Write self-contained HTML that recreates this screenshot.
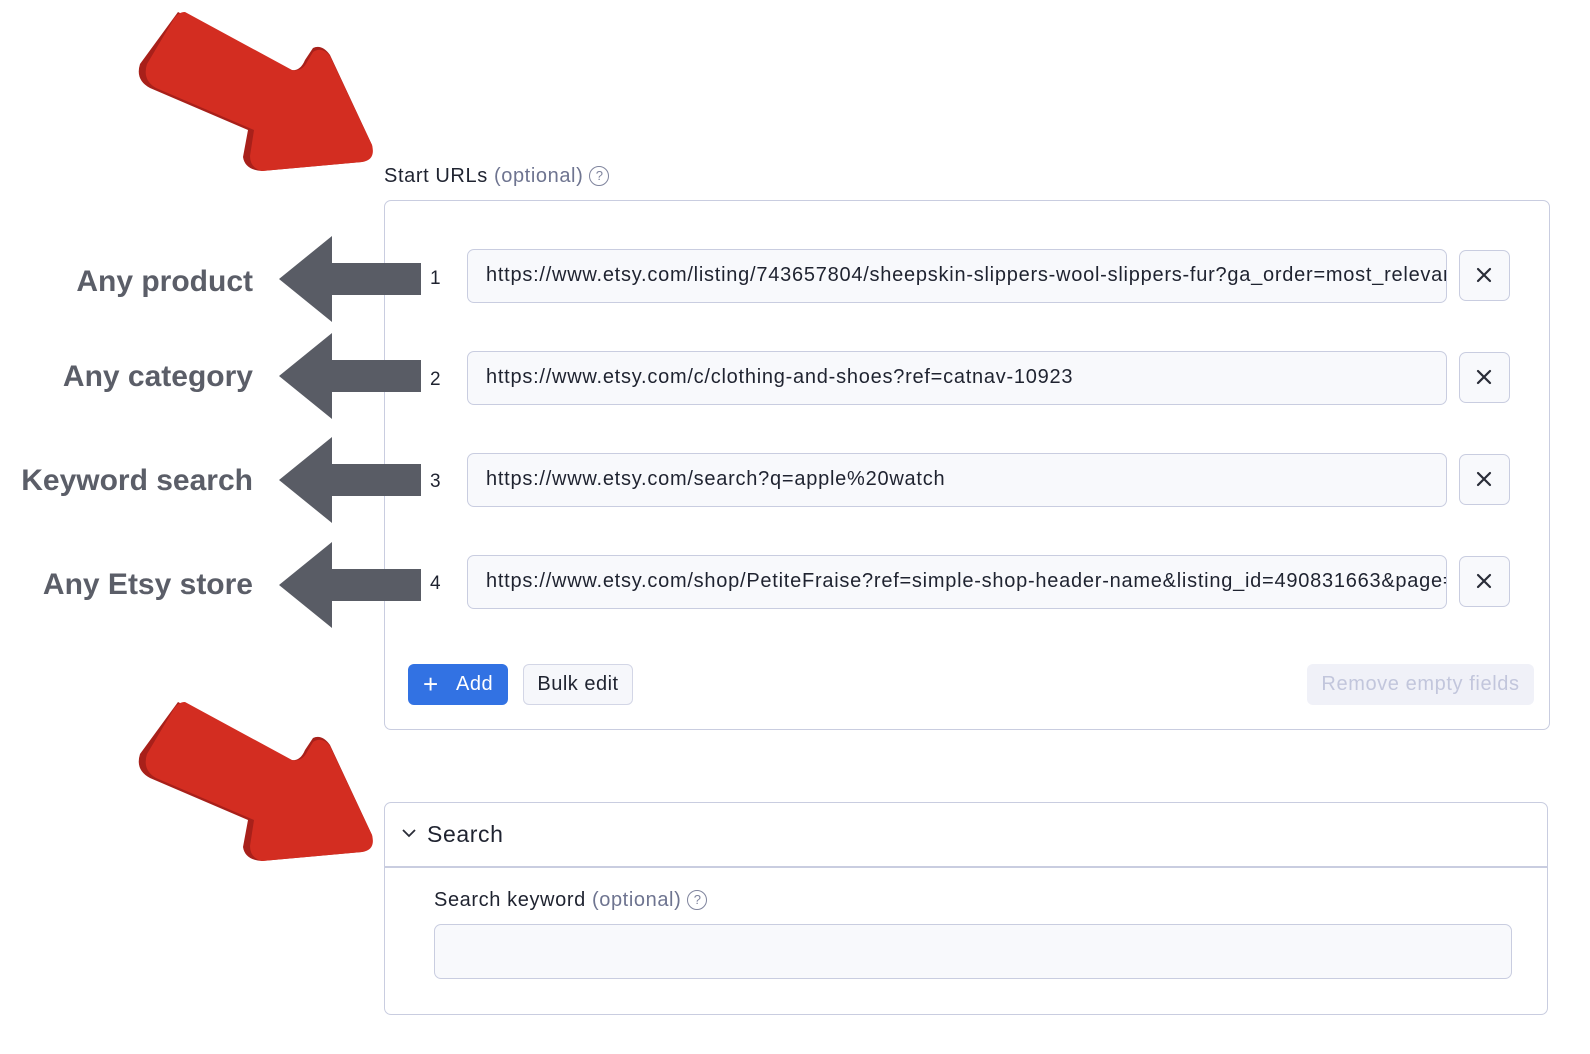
<!DOCTYPE html>
<html><head><meta charset="utf-8"><style>
*{box-sizing:border-box;margin:0;padding:0}
body{width:1590px;height:1054px;background:#fff;position:relative;overflow:hidden;font-family:"Liberation Sans",sans-serif;color:#1f2330}
.abs{position:absolute}
.lbl{position:absolute;right:1337px;font-size:30px;font-weight:bold;color:#5b5e68;white-space:nowrap}
.num{position:absolute;left:430px;font-size:19px;color:#1f2330}
.inp{position:absolute;left:467px;width:980px;height:54px;border:1.5px solid #c9cde0;border-radius:7px;background:#f8f9fc;font-size:20px;letter-spacing:0.75px;line-height:51px;padding-left:18px;overflow:hidden;white-space:nowrap;color:#1f2330}
.x{position:absolute;left:1459px;width:51px;height:51px;border:1.5px solid #c9cde0;border-radius:7px;background:#f8f9fc}
.q{display:inline-block;width:20px;height:20px;border:1.6px solid #7f849d;border-radius:50%;font-size:13px;line-height:17px;text-align:center;color:#7f849d;vertical-align:2px;margin-left:6px;letter-spacing:0}
</style></head><body>

<div class="abs" style="left:384px;top:200px;width:1166px;height:530px;border:1.5px solid #c9cde0;border-radius:7px"></div>
<div class="abs" style="left:384px;top:802px;width:1164px;height:213px;border:1.5px solid #c9cde0;border-radius:7px"></div>

<svg class="abs" style="left:0;top:0;z-index:2" width="440" height="1054">
<defs>
<g id="ra">
<path d="M178,12 L290,70 Q300,72 305,60 L313,48 Q322,44 330,55 L372,145 Q375,160 362,162 L262,171 Q245,170 243,157 L248,130 L150,88 Q135,80 140,64 Z" fill="#a8201a"/>
<path d="M185,12 L292,70 Q302,72 307,62 L313,52 Q322,46 330,56 L372,145 Q376,160 362,162 L262,171 Q250,168 250,156 L254,130 L156,88 Q142,80 147,64 L172,22 Q177,12 185,12 Z" fill="#d32d21"/>
</g>
</defs>
<use href="#ra"/>
<use href="#ra" y="690"/>
<g fill="#595c65">
<path d="M279,279 L332,236 L332,263 L421,263 L421,295 L332,295 L332,322 Z"/>
<path d="M279,376 L332,333 L332,360 L421,360 L421,392 L332,392 L332,419 Z"/>
<path d="M279,480 L332,437 L332,464 L421,464 L421,496 L332,496 L332,523 Z"/>
<path d="M279,585 L332,542 L332,569 L421,569 L421,601 L332,601 L332,628 Z"/>
</g>
</svg>

<div class="lbl" style="top:265px">Any product</div>
<div class="lbl" style="top:360px">Any category</div>
<div class="lbl" style="top:464px">Keyword search</div>
<div class="lbl" style="top:568px">Any Etsy store</div>

<div class="abs" style="left:384px;top:165px;font-size:20px;letter-spacing:0.6px;white-space:nowrap">Start URLs <span style="color:#6e7490">(optional)</span><span class="q">?</span></div>

<div class="num" style="top:268px">1</div>
<div class="num" style="top:369px">2</div>
<div class="num" style="top:471px">3</div>
<div class="num" style="top:573px">4</div>

<div class="inp" style="top:249px">https://www.etsy.com/listing/743657804/sheepskin-slippers-wool-slippers-fur?ga_order=most_relevant</div>
<div class="inp" style="top:351px">https://www.etsy.com/c/clothing-and-shoes?ref=catnav-10923</div>
<div class="inp" style="top:453px">https://www.etsy.com/search?q=apple%20watch</div>
<div class="inp" style="top:555px">https://www.etsy.com/shop/PetiteFraise?ref=simple-shop-header-name&amp;listing_id=490831663&amp;page=2</div>

<div class="x" style="top:250px"></div><div class="x" style="top:352px"></div><div class="x" style="top:454px"></div><div class="x" style="top:556px"></div>
<svg class="abs" style="left:0;top:0;pointer-events:none" width="1590" height="1054">
<g stroke="#2a2d38" stroke-width="2.2" stroke-linecap="round">
<path d="M1478,269 L1490,281 M1490,269 L1478,281"/>
<path d="M1478,371 L1490,383 M1490,371 L1478,383"/>
<path d="M1478,473 L1490,485 M1490,473 L1478,485"/>
<path d="M1478,575 L1490,587 M1490,575 L1478,587"/>
</g>
</svg>

<div class="abs" style="left:408px;top:664px;width:100px;height:41px;background:#3272e3;border-radius:6px;color:#fff;font-size:20px;line-height:41px;letter-spacing:0.5px">
<span class="abs" style="left:15px;top:0;font-size:26px;font-weight:300">+</span><span class="abs" style="left:48px">Add</span></div>
<div class="abs" style="left:523px;top:664px;width:110px;height:41px;background:#f6f7fb;border:1.5px solid #d3d6e6;border-radius:6px;font-size:20px;letter-spacing:0.5px;line-height:38px;text-align:center">Bulk edit</div>
<div class="abs" style="left:1307px;top:664px;width:227px;height:41px;background:#f0f1f8;border-radius:6px;font-size:20px;letter-spacing:0.6px;line-height:41px;text-align:center;color:#c2c6dc">Remove empty fields</div>

<div class="abs" style="left:385px;top:866px;width:1162px;height:1.5px;background:#c9cde0"></div>
<svg class="abs" style="left:400px;top:826px" width="18" height="14"><path d="M3,4 L9,10 L15,4" stroke="#2a2d38" stroke-width="1.8" fill="none"/></svg>
<div class="abs" style="left:427px;top:821px;font-size:23px;letter-spacing:0.6px">Search</div>
<div class="abs" style="left:434px;top:889px;font-size:20px;letter-spacing:0.6px;white-space:nowrap">Search keyword <span style="color:#6e7490">(optional)</span><span class="q">?</span></div>
<div class="abs" style="left:434px;top:924px;width:1078px;height:55px;border:1.5px solid #c9cde0;border-radius:7px;background:#f8f9fc"></div>
</body></html>
